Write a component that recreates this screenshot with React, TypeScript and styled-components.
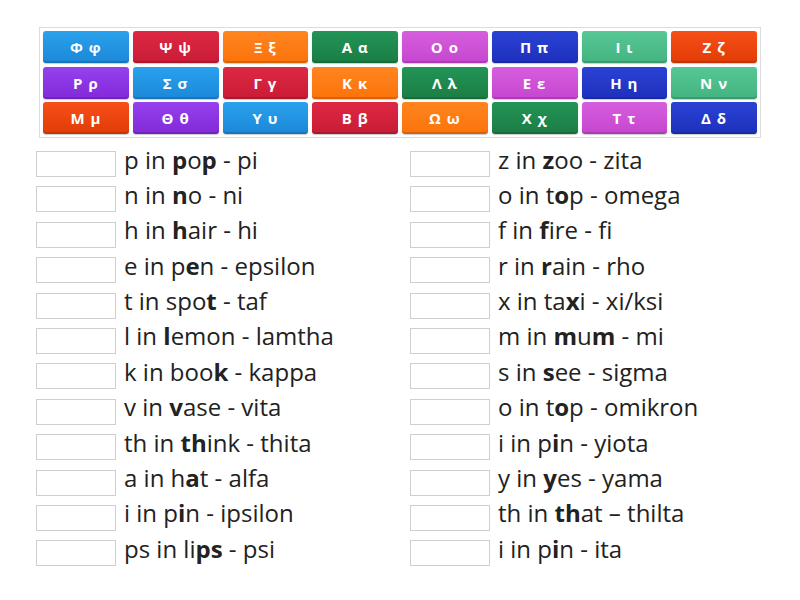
import React from "react";
import styled, { createGlobalStyle } from "styled-components";

const Global = createGlobalStyle`
  html, body { margin: 0; padding: 0; background: #ffffff; }
  body { font-family: "Open Sans", "DejaVu Sans", sans-serif; color: #222222; }
`;

type Tone = "blue" | "red" | "orange" | "green" | "pink" | "navy" | "mint" | "flame" | "purple";

const tones: Record<Tone, [string, string]> = {
  blue: ["#2aa1ec", "#1b88d8"],
  red: ["#de2843", "#c81c36"],
  orange: ["#ff8520", "#fb730a"],
  green: ["#239457", "#1a7d44"],
  pink: ["#d65ede", "#c646cf"],
  navy: ["#2a42d4", "#1e30bc"],
  mint: ["#56c795", "#44b380"],
  flame: ["#f64f18", "#e23c06"],
  purple: ["#9640ee", "#8229d8"],
};

const Page = styled.div`
  padding-top: 27px;
  width: 800px;
`;

const Panel = styled.div`
  margin-left: 39px;
  width: 722px;
  box-sizing: border-box;
  border: 1px solid #dcdcdc;
  padding: 3px;
  display: grid;
  grid-template-columns: repeat(8, 1fr);
  grid-auto-rows: 32px;
  column-gap: 4px;
  row-gap: 3.5px;
`;

const Tile = styled.div<{ $tone: Tone }>`
  border-radius: 3px;
  background: linear-gradient(${(p) => tones[p.$tone][0]}, ${(p) => tones[p.$tone][1]});
  box-shadow: inset 0 -2px 0 rgba(0, 0, 0, 0.14), 0 1px 1px rgba(0, 0, 0, 0.2);
  color: #ffffff;
  font-family: "Open Sans", "DejaVu Sans", sans-serif;
  font-weight: 700;
  font-size: 15px;
  letter-spacing: 1px;
  display: flex;
  align-items: center;
  justify-content: center;
`;

const List = styled.div`
  margin-top: 6.5px;
  padding-left: 36px;
  display: grid;
  grid-template-columns: 374px 1fr;
  grid-auto-flow: column;
  grid-template-rows: repeat(12, 35.4px);
`;

const Row = styled.div`
  display: flex;
  align-items: flex-start;
`;

const Slot = styled.div`
  margin-top: 6.5px;
  width: 80px;
  height: 26px;
  box-sizing: border-box;
  border: 1px solid #cfcfcf;
  background: #ffffff;
  flex: none;
`;

const Label = styled.div`
  margin-left: 8px;
  margin-top: 2px;
  font-size: 24px;
  line-height: 26px;
  color: #222222;
  white-space: nowrap;
`;

const B = styled.b`
  font-weight: 700;
`;

const tiles: [string, Tone][] = [
  ["Φ φ", "blue"], ["Ψ ψ", "red"], ["Ξ ξ", "orange"], ["Α α", "green"],
  ["Ο ο", "pink"], ["Π π", "navy"], ["Ι ι", "mint"], ["Ζ ζ", "flame"],
  ["Ρ ρ", "purple"], ["Σ σ", "blue"], ["Γ γ", "red"], ["Κ κ", "orange"],
  ["Λ λ", "green"], ["Ε ε", "pink"], ["Η η", "navy"], ["Ν ν", "mint"],
  ["Μ μ", "flame"], ["Θ θ", "purple"], ["Υ υ", "blue"], ["Β β", "red"],
  ["Ω ω", "orange"], ["Χ χ", "green"], ["Τ τ", "pink"], ["Δ δ", "navy"],
];

// segments: odd indexes are bold
const rows: string[][] = [
  ["p in ", "p", "o", "p", " - pi"],
  ["n in ", "n", "o - ni"],
  ["h in ", "h", "air - hi"],
  ["e in p", "e", "n - epsilon"],
  ["t in spo", "t", " - taf"],
  ["l in ", "l", "emon - lamtha"],
  ["k in boo", "k", " - kappa"],
  ["v in ", "v", "ase - vita"],
  ["th in ", "th", "ink - thita"],
  ["a in h", "a", "t - alfa"],
  ["i in p", "i", "n - ipsilon"],
  ["ps in li", "ps", " - psi"],
  ["z in ", "z", "oo - zita"],
  ["o in t", "o", "p - omega"],
  ["f in ", "f", "ire - fi"],
  ["r in ", "r", "ain - rho"],
  ["x in ta", "x", "i - xi/ksi"],
  ["m in ", "m", "u", "m", " - mi"],
  ["s in ", "s", "ee - sigma"],
  ["o in t", "o", "p - omikron"],
  ["i in p", "i", "n - yiota"],
  ["y in ", "y", "es - yama"],
  ["th in ", "th", "at \u2013 thilta"],
  ["i in p", "i", "n - ita"],
];

export default function App() {
  return (
    <Page>
      <Global />
      <Panel>
        {tiles.map(([t, tone], i) => (
          <Tile key={i} $tone={tone}>{t}</Tile>
        ))}
      </Panel>
      <List>
        {rows.map((segs, i) => (
          <Row key={i}>
            <Slot />
            <Label>
              {segs.map((s, j) => (j % 2 === 1 ? <B key={j}>{s}</B> : <span key={j}>{s}</span>))}
            </Label>
          </Row>
        ))}
      </List>
    </Page>
  );
}
